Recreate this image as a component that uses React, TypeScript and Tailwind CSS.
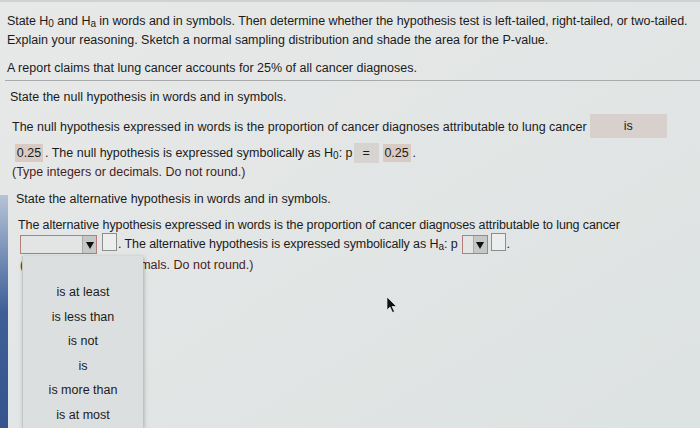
import React from 'react';

const Sub = ({ children }: { children: React.ReactNode }) => (
  <sub className="relative top-[2px] text-[10px] leading-none align-baseline">{children}</sub>
);

const Arrow = () => (
  <span className="flex h-full w-[14px] items-center justify-center bg-[#c6c8c8] border-l border-[#a9abab]">
    <svg width="8" height="8" viewBox="0 0 8 8">
      <polygon points="0,1 8,1 4,8" fill="#111" />
    </svg>
  </span>
);

const EmptyBox = () => (
  <span className="inline-block h-[18px] w-[15px] border border-[#8c8e8e] bg-[#eceeee]" />
);

const options = ['', 'is at least', 'is less than', 'is not', 'is', 'is more than', 'is at most'];

export default function App() {
  return (
    <div className="relative h-[428px] w-[700px] overflow-hidden bg-linear-to-br from-[#e7e9e8] to-[#dde2e2] font-['Liberation_Sans',Arial,sans-serif] text-[12.5px] text-[#1b1b1b]">
      <div className="h-[2px] bg-[#cfd2d2]" />

      {/* Question stem */}
      <div className="pl-[7px] pt-[10px] leading-[19px] whitespace-nowrap">
        <div className="tracking-[-0.05px]">
          State H<Sub>0</Sub> and H<Sub>a</Sub> in words and in symbols. Then determine whether the hypothesis test is
          left-tailed, right-tailed, or two-tailed.
        </div>
        <div>Explain your reasoning. Sketch a normal sampling distribution and shade the area for the P-value.</div>
        <div className="mt-[9px]">A report claims that lung cancer accounts for 25% of all cancer diagnoses.</div>
      </div>
      <div className="ml-[5px] mt-[2px] h-px bg-[#a9abab]" />

      {/* Null hypothesis */}
      <div className="pl-[10px] pt-[8px] leading-[16px]">State the null hypothesis in words and in symbols.</div>

      <div className="pl-[12px] pt-[9px] whitespace-nowrap">
        <div className="flex h-[24px] items-center">
          <span className="mt-[3px]">
            The null hypothesis expressed in words is the proportion of cancer diagnoses attributable to lung cancer
          </span>
          <span className="ml-[3px] flex h-[24px] w-[77px] items-center justify-center bg-[#d7d0cc]">is</span>
        </div>
        <div className="mt-[6px] flex h-[18px] items-center">
          <span className="ml-[3px] flex h-[18px] w-[28px] items-center justify-center bg-[#d9cbc3]">0.25</span>
          <span className="ml-[2px]">
            . The null hypothesis is expressed symbolically as H<Sub>0</Sub>: p
          </span>
          <span className="ml-[1px] flex h-[20px] w-[25px] items-center justify-center bg-[#d6d3d1]">=</span>
          <span className="ml-[4px] flex h-[18px] w-[28px] items-center justify-center bg-[#d9cbc3]">0.25</span>
          <span className="ml-[2px]">.</span>
        </div>
        <div className="mt-[2px] leading-[16px] text-[#4a1d20]">(Type integers or decimals. Do not round.)</div>
      </div>

      {/* Alternative hypothesis */}
      <div className="pl-[16px] pt-[11px] leading-[16px]">State the alternative hypothesis in words and in symbols.</div>

      <div className="pl-[18px] pt-[10px] whitespace-nowrap">
        <div className="leading-[16px] tracking-[-0.1px]">
          The alternative hypothesis expressed in words is the proportion of cancer diagnoses attributable to lung
          cancer
        </div>
        <div className="mt-[2px] flex h-[19px] items-center">
          <span className="ml-[2px] flex h-[19px] w-[77px] justify-end border border-[#b27d7b] bg-[#e3e4e4]">
            <Arrow />
          </span>
          <span className="ml-[5px]">
            <EmptyBox />
          </span>
          <span className="ml-[1px] tracking-[-0.1px]">
            . The alternative hypothesis is expressed symbolically as H<Sub>a</Sub>: p
          </span>
          <span className="ml-[4px] flex h-[19px] w-[26px] justify-end border border-[#b27d7b] bg-[#e3e4e4]">
            <Arrow />
          </span>
          <span className="ml-[3px]">
            <EmptyBox />
          </span>
          <span className="ml-[1px]">.</span>
        </div>
        <div className="mt-[3px] pl-[2px] leading-[16px] text-[#4a1d20]">(Type integers or decimals. Do not round.)</div>
      </div>

      {/* Open dropdown menu */}
      <div className="absolute left-[22px] top-[256px] w-[121px] border-l border-[#c3c6c6] bg-[#dcdfdf] shadow-[1px_1px_4px_rgba(0,0,0,0.25)]">
        {options.map((o, i) => (
          <div key={i} className="flex h-[24.5px] items-center justify-center">
            {o}
          </div>
        ))}
      </div>

      {/* Mouse pointer */}
      <svg className="absolute left-[387px] top-[297px]" width="11" height="16" viewBox="0 0 11 16">
        <polygon points="0,0 0,13 3,10 5.5,15.5 7.5,14.5 5,9.5 9.5,9.5" fill="#111" stroke="#fff" strokeWidth="0.6" />
      </svg>

      {/* Screen bezel strip */}
      <div className="absolute bottom-0 left-0 top-[195px] w-[8px] bg-linear-to-b from-[#b7c4d6] via-[#3f5f98] to-[#35548e]" />
    </div>
  );
}
